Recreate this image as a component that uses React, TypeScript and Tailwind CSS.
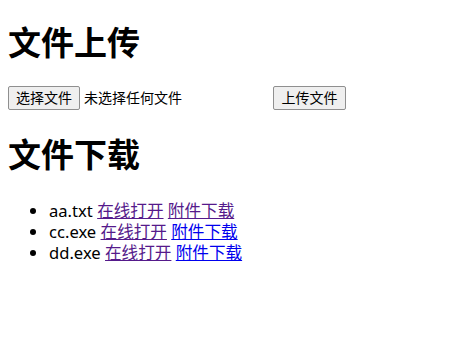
const files = [
  { name: "aa.txt", openVisited: true, downVisited: true },
  { name: "cc.exe", openVisited: true, downVisited: false },
  { name: "dd.exe", openVisited: true, downVisited: false },
];

const font = "font-['Noto_Sans','Noto_Sans_CJK_SC',sans-serif]";

export default function App() {
  return (
    <div className={`px-2 pt-[22px] text-black bg-white min-h-[356px] ${font}`}>
      <h1 className="text-[33px] font-bold leading-[42px]">文件上传</h1>

      <form className="mt-[21px] flex items-center h-[25px]">
        {/* file input */}
        <div className="w-[261px] flex items-center">
          <button
            type="button"
            className="w-[72px] h-[24px] text-[14px] leading-none bg-[#efefef] border border-[#8f8f8f] rounded-[2px] text-black"
          >
            选择文件
          </button>
          <span className="ml-[4px] text-[14px] text-black">未选择任何文件</span>
        </div>
        <button
          type="submit"
          className="ml-[4px] w-[73px] h-[24px] text-[14px] leading-none bg-[#efefef] border border-[#8f8f8f] rounded-[2px] text-black"
        >
          上传文件
        </button>
      </form>

      <h1 className="mt-[24px] text-[33px] font-bold leading-[42px]">文件下载</h1>

      <ul className="mt-[24px] pl-[41px] list-disc text-[16.6px] leading-[21px]">
        {files.map((f) => (
          <li key={f.name}>
            {f.name}{" "}
            <a
              href="#"
              className={`underline ${f.openVisited ? "text-[#551a8b]" : "text-[#0000ee]"}`}
            >
              在线打开
            </a>{" "}
            <a
              href="#"
              className={`underline ${f.downVisited ? "text-[#551a8b]" : "text-[#0000ee]"}`}
            >
              附件下载
            </a>
          </li>
        ))}
      </ul>
    </div>
  );
}
